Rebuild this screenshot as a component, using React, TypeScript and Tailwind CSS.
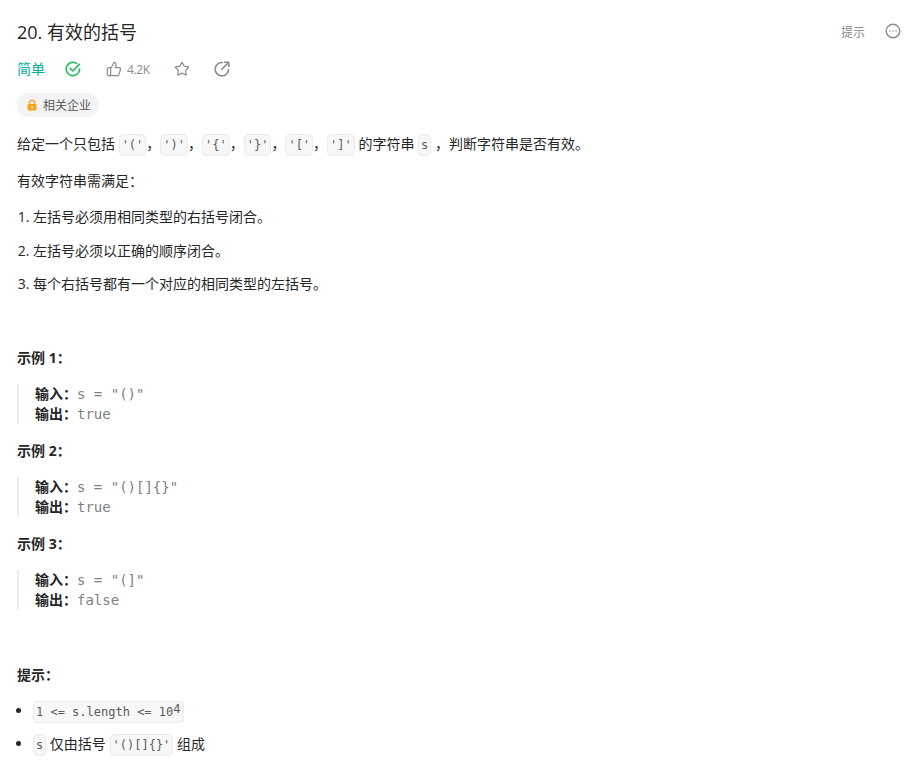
import { Star, ThumbsUp } from 'lucide-react'

const sans = "font-['Open_Sans','Noto_Sans_CJK_SC',sans-serif]"

function Code({ children }: { children: React.ReactNode }) {
  return (
    <code className="rounded-[5px] border border-[#ebebeb] bg-[#f7f7f7] px-[2px] py-[3px] font-['DejaVu_Sans_Mono',monospace] text-[12px] leading-[14px] text-[#5c5c5c]">
      {children}
    </code>
  )
}

function Example({ title, input, output }: { title: string; input: string; output: string }) {
  return (
    <div>
      <p className="mb-[15px] h-[22px] text-[14px] font-bold leading-[22px]">{title}</p>
      <div className="mb-[16px] border-l-2 border-[#ececec] pl-[16px] leading-[20px]">
        <div className="flex h-[20px] items-center">
          <b className="text-[14px]">输入：</b>
          <span className="font-['DejaVu_Sans_Mono',monospace] text-[14px] text-[#808080]">{input}</span>
        </div>
        <div className="flex h-[20px] items-center">
          <b className="text-[14px]">输出：</b>
          <span className="font-['DejaVu_Sans_Mono',monospace] text-[14px] text-[#808080]">{output}</span>
        </div>
      </div>
    </div>
  )
}

export default function App() {
  return (
    <div className={`h-[780px] w-[921px] overflow-hidden bg-white px-[17px] pt-[20px] text-[#262626] ${sans}`}>
      <div className="flex h-[24px] items-center justify-between">
        <h1 className="text-[18px] font-normal leading-[24px]">20. 有效的括号</h1>
        <div className="flex items-center gap-[20px] pr-[3px]">
          <span className="mt-[2px] text-[12px] text-[#8c8c8c]">提示</span>
          <svg viewBox="0 0 16 16" className="mb-[2px] h-[16px] w-[16px] text-[#8c8c8c]" fill="none" stroke="currentColor" strokeWidth="1.4">
            <circle cx="8" cy="8" r="6.8" />
            <circle cx="5" cy="8" r="0.8" fill="currentColor" stroke="none" />
            <circle cx="8" cy="8" r="0.8" fill="currentColor" stroke="none" />
            <circle cx="11" cy="8" r="0.8" fill="currentColor" stroke="none" />
          </svg>
        </div>
      </div>

      <div className="mt-[14px] flex h-[20px] items-center">
        <span className="w-[48px] text-[14px] text-[#00af9b]">简单</span>
        <svg viewBox="0 0 16 16" className="mt-[2px] h-[16px] w-[16px] text-[#2cbb5d]" fill="none" stroke="currentColor" strokeWidth="1.7" strokeLinecap="round" strokeLinejoin="round">
          <path d="M14.6 8a6.7 6.7 0 1 1-3-5.6" />
          <path d="M5.2 7.4l2.6 2.6 6.4-6.6" />
        </svg>
        <ThumbsUp className="ml-[25px] mt-[2px] h-[16px] w-[16px] text-[#8c8c8c]" strokeWidth={1.8} />
        <span className="ml-[5px] mt-[3px] w-[23px] text-[12px] tracking-[-0.4px] text-[#8c8c8c]">4.2K</span>
        <Star className="ml-[24px] mt-[2px] h-[16px] w-[16px] text-[#8c8c8c]" strokeWidth={1.8} />
        <svg viewBox="0 0 16 16" className="ml-[24px] mt-[2px] h-[16px] w-[16px] text-[#8c8c8c]" fill="none" stroke="currentColor" strokeWidth="1.6">
          <path d="M9 1.6A6.7 6.7 0 1 0 14.6 8" />
          <path d="M7.5 8.5L14.5 1.5M10 1.3h4.7V6" />
        </svg>
      </div>

      <div className="mt-[15px] flex h-[24px] w-[82px] items-center rounded-full bg-[#f2f3f4] pl-[9px] text-[12px] text-[#595959]">
        <svg viewBox="0 0 12 12" className="h-[12px] w-[12px]">
          <path d="M3.5 5.5V3.6a2.5 2.5 0 0 1 5 0v1.9" fill="none" stroke="#ffa116" strokeWidth="1.4" />
          <rect x="1.6" y="5" width="8.8" height="6.4" rx="1.2" fill="#ffa116" />
          <circle cx="6" cy="8.2" r="1" fill="#fff" />
        </svg>
        <span className="ml-[5px] mt-[2px]">相关企业</span>
      </div>

      <div className="mt-[16px] text-[14px] leading-[22px]">
        <p className="h-[22px]">
          给定一个只包括 <Code>'('</Code>，<Code>')'</Code>，<Code>'{'{'}'</Code>，<Code>'{'}'}'</Code>，<Code>'['</Code>，<Code>']'</Code> 的字符串 <Code>s</Code> ，判断字符串是否有效。
        </p>
        <p className="mt-[15px] h-[22px]">有效字符串需满足：</p>
        <ol className="mt-[14px] list-decimal pl-[16px]">
          <li className="h-[22px]">左括号必须用相同类型的右括号闭合。</li>
          <li className="mt-[11.5px] h-[22px]">左括号必须以正确的顺序闭合。</li>
          <li className="mt-[11.5px] h-[22px]">每个右括号都有一个对应的相同类型的左括号。</li>
        </ol>
        <div className="mt-[52px]">
          <Example title="示例 1：" input={'s = "()"'} output="true" />
          <Example title="示例 2：" input={'s = "()[]{}"'} output="true" />
          <Example title="示例 3：" input={'s = "(]"'} output="false" />
        </div>
        <p className="mt-[54px] h-[22px] font-bold">提示：</p>
        <ul className="mt-[14px] list-disc pl-[16px]">
          <li className="h-[22px]">
            <Code>1 &lt;= s.length &lt;= 10<sup className="top-[-3px] text-[12px]">4</sup></Code>
          </li>
          <li className="mt-[11px] h-[22px]">
            <Code>s</Code> 仅由括号 <Code>'()[]{'{'}{'}'}'</Code> 组成
          </li>
        </ul>
      </div>
    </div>
  )
}
